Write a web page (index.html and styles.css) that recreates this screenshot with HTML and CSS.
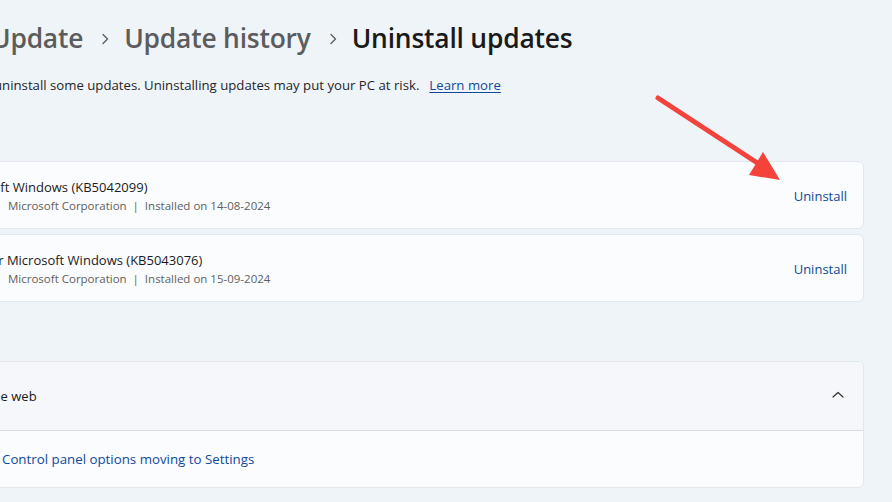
FILE: index.html
```html
<!DOCTYPE html>
<html lang="en">
<head>
<meta charset="utf-8">
<title>Uninstall updates</title>
<link rel="stylesheet" href="styles.css">
</head>
<body>
<div class="page">
  <div class="column">
    <header class="crumbs">
      <span class="crumb crumb-first">Update</span>
      <svg class="sep" width="8" height="12" viewBox="0 0 8 12"><path d="M2 1.5 L6.5 6 L2 10.5" fill="none" stroke="#5f5f5f" stroke-width="1.4" stroke-linecap="round" stroke-linejoin="round"/></svg>
      <span class="crumb">Update history</span>
      <svg class="sep" width="8" height="12" viewBox="0 0 8 12"><path d="M2 1.5 L6.5 6 L2 10.5" fill="none" stroke="#5f5f5f" stroke-width="1.4" stroke-linecap="round" stroke-linejoin="round"/></svg>
      <span class="crumb crumb-current">Uninstall updates</span>
    </header>

    <p class="desc"><span class="desc-text">uninstall some updates. Uninstalling updates may put your PC at risk.</span><a class="link learn" href="#">Learn more</a></p>

    <section class="list">
      <div class="card row">
        <div class="info">
          <div class="title title-1">Microsoft Windows (KB5042099)</div>
          <div class="meta">Microsoft Corporation&nbsp;&nbsp;|&nbsp;&nbsp;Installed on 14-08-2024</div>
        </div>
        <a class="action" href="#">Uninstall</a>
      </div>
      <div class="card row">
        <div class="info">
          <div class="title title-2">for Microsoft Windows (KB5043076)</div>
          <div class="meta">Microsoft Corporation&nbsp;&nbsp;|&nbsp;&nbsp;Installed on 15-09-2024</div>
        </div>
        <a class="action" href="#">Uninstall</a>
      </div>
    </section>

    <section class="card expander">
      <div class="exp-head">
        <span class="exp-title">the web</span>
        <svg class="chev-up" width="14" height="10" viewBox="0 0 14 10"><path d="M2 7 L7 2.5 L12 7" fill="none" stroke="#333" stroke-width="1.2" stroke-linecap="round" stroke-linejoin="round"/></svg>
      </div>
      <div class="exp-body">
        <a class="link exp-link" href="#">Control panel options moving to Settings</a>
      </div>
    </section>
  </div>

  <svg class="arrow" width="892" height="502" viewBox="0 0 892 502">
    <line x1="658" y1="98" x2="762" y2="166" stroke="#f4433a" stroke-width="5" stroke-linecap="round"/>
    <polygon points="763,152 749,175 780,180" fill="#f4433a"/>
  </svg>
</div>
</body>
</html>
```

FILE: styles.css
```css
html, body {
  margin: 0;
  padding: 0;
}

body {
  background: #eff4f9;
  font-family: "Open Sans", "Noto Sans", sans-serif;
  color: #1b1b1b;
}

.page {
  position: relative;
  width: 892px;
  height: 502px;
  overflow: hidden;
  background: #eff4f9;
}

.column {
  margin-left: -20px;
  width: 884px;
  padding-top: 18px;
}

.crumbs {
  display: flex;
  align-items: center;
  height: 40px;
  font-size: 26.4px;
  font-weight: 600;
  letter-spacing: -0.2px;
}

.crumb {
  color: #5c5c5c;
  white-space: nowrap;
}

.crumb-first {
  margin-left: 11px;
}

.crumb-current {
  color: #1a1a1a;
}

.sep {
  margin: 2px 15px 0 18px;
  flex: none;
}

.desc {
  margin: 16px 0 0;
  height: 22px;
  display: flex;
  align-items: center;
  font-size: 13.2px;
  color: #262626;
  white-space: nowrap;
}

.desc-text {
  margin-left: 14px;
}

.link {
  color: #0f4a9b;
}

.learn {
  margin-left: 10px;
  text-decoration: underline;
  text-underline-offset: 2px;
}

.list {
  margin-top: 65px;
  display: flex;
  flex-direction: column;
  gap: 5px;
}

.card {
  background: #fafcfe;
  border: 1px solid #e3e7ec;
  border-radius: 6px;
  box-sizing: border-box;
}

.row {
  height: 68px;
  display: flex;
  align-items: center;
  justify-content: space-between;
  padding: 0 16px 0 27px;
}

.info {
  display: flex;
  flex-direction: column;
  gap: 2px;
  white-space: nowrap;
  margin-top: 2px;
}

.title {
  font-size: 13px;
  color: #1b1b1b;
  line-height: 18px;
}

.title-1 {
  margin-left: -56px;
}

.title-2 {
  margin-left: -22px;
}

.meta {
  font-size: 11.5px;
  color: #5f5f5f;
  line-height: 16px;
}

.action {
  font-size: 13px;
  color: #0f4a9b;
  text-decoration: none;
  margin-top: 2px;
}

.expander {
  margin-top: 59px;
  display: flex;
  flex-direction: column;
}

.exp-head {
  height: 68px;
  display: flex;
  align-items: center;
  justify-content: space-between;
  padding: 0 18px 0 7px;
  border-bottom: 1px solid #d9dde2;
  background: #f5f7fa;
  border-radius: 6px 6px 0 0;
}

.exp-title {
  font-size: 13px;
  color: #1b1b1b;
}

.chev-up {
  margin-top: -2px;
}

.exp-body {
  height: 56px;
  display: flex;
  align-items: center;
  padding-left: 21px;
}

.exp-link {
  font-size: 13.3px;
  text-decoration: none;
}

.arrow {
  position: absolute;
  left: 0;
  top: 0;
  pointer-events: none;
}
```
